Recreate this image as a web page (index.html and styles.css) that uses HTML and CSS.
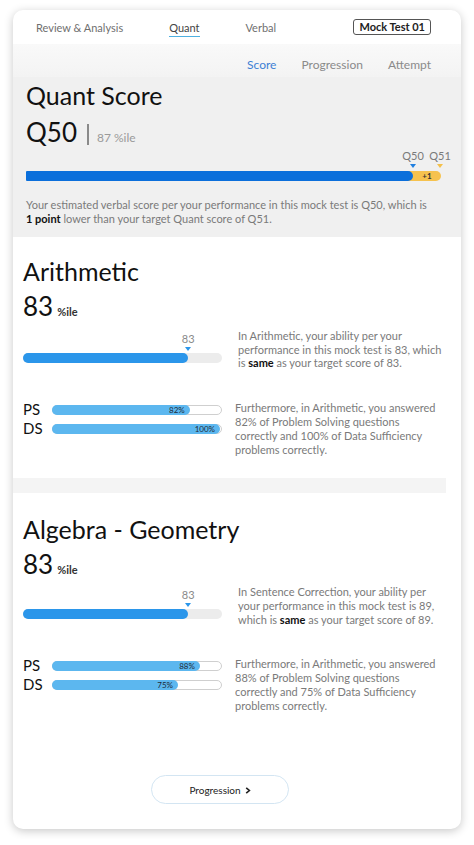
FILE: index.html
```html
<!DOCTYPE html>
<html>
<head>
<meta charset="utf-8">
<link rel="stylesheet" href="styles.css">
</head>
<body>
<div class="card">
  <nav class="topnav">
    <span class="tn">Review &amp; Analysis</span>
    <span class="tn tn-active">Quant</span>
    <span class="tn">Verbal</span>
    <span class="mock">Mock Test 01</span>
  </nav>
  <div class="subtabs">
    <span class="st st-active">Score</span>
    <span class="st">Progression</span>
    <span class="st">Attempt</span>
  </div>

  <section class="quant">
    <h1 class="qtitle">Quant Score</h1>
    <div class="qscore"><span class="qbig">Q50</span><span class="qdiv"></span><span class="qpct">87 %ile</span></div>
    <div class="qmarks">
      <div class="qmark" style="left:387px"><span class="qlab">Q50</span><span class="tri tri-blue"></span></div>
      <div class="qmark" style="left:414px"><span class="qlab">Q51</span><span class="tri tri-yellow"></span></div>
    </div>
    <div class="qbar">
      <div class="qbar-blue" style="width:387px"></div>
      <div class="qbar-yellow">+1</div>
    </div>
    <p class="qdesc">Your estimated verbal score per your performance in this mock test is Q50, which is<br><b>1 point</b> lower than your target Quant score of Q51.</p>
  </section>

  <section class="topic">
    <h2 class="ttitle">Arithmetic</h2>
    <div class="tscore"><span class="tbig">83</span><span class="tile">%ile</span></div>
    <div class="trow">
      <div class="tleft">
        <div class="tmarks">
          <div class="tmark" style="left:83%"><span class="tlab">83</span><span class="tri tri-mid"></span></div>
        </div>
        <div class="tbar"><div class="tfill" style="width:83%"></div></div>
      </div>
      <p class="tdesc">In Arithmetic, your ability per your<br>performance in this mock test is 83, which<br>is <b>same</b> as your target score of 83.</p>
    </div>
    <div class="prow">
      <div class="pleft">
        <div class="pline"><span class="plab">PS</span><div class="pbar"><div class="pfill" style="width:82%">82%</div></div></div>
        <div class="pline"><span class="plab">DS</span><div class="pbar"><div class="pfill" style="width:100%">100%</div></div></div>
      </div>
      <p class="pdesc">Furthermore, in Arithmetic, you answered<br>82% of Problem Solving questions<br>correctly and 100% of Data Sufficiency<br>problems correctly.</p>
    </div>
  </section>

  <div class="sep"></div>

  <section class="topic topic2">
    <h2 class="ttitle">Algebra - Geometry</h2>
    <div class="tscore"><span class="tbig">83</span><span class="tile">%ile</span></div>
    <div class="trow trow2">
      <div class="tleft">
        <div class="tmarks">
          <div class="tmark" style="left:83%"><span class="tlab">83</span><span class="tri tri-mid"></span></div>
        </div>
        <div class="tbar"><div class="tfill" style="width:83%"></div></div>
      </div>
      <p class="tdesc">In Sentence Correction, your ability per<br>your performance in this mock test is 89,<br>which is <b>same</b> as your target score of 89.</p>
    </div>
    <div class="prow">
      <div class="pleft">
        <div class="pline"><span class="plab">PS</span><div class="pbar"><div class="pfill" style="width:88%">88%</div></div></div>
        <div class="pline"><span class="plab">DS</span><div class="pbar"><div class="pfill" style="width:75%">75%</div></div></div>
      </div>
      <p class="pdesc">Furthermore, in Arithmetic, you answered<br>88% of Problem Solving questions<br>correctly and 75% of Data Sufficiency<br>problems correctly.</p>
    </div>
  </section>

  <div class="btnwrap">
    <button class="btn">Progression <svg class="chev" width="6" height="7" viewBox="0 0 6 7"><path d="M1.2 0.8 L4.4 3.5 L1.2 6.2" fill="none" stroke="#222" stroke-width="1.6"/></svg></button>
  </div>
</div>
</body>
</html>
```

FILE: styles.css
```css
* { box-sizing: border-box; }
html, body { margin: 0; padding: 0; background: #fff; }
body {
  padding: 10px 13px;
  font-family: Lato, "Open Sans", sans-serif;
  color: #111;
}
.card {
  width: 448px;
  height: 819px;
  border-radius: 10px;
  background: #fff;
  box-shadow: 0 2px 10px rgba(0,0,0,0.22);
  overflow: hidden;
}
.topnav {
  height: 34px;
  display: flex;
  align-items: center;
  padding: 0 30px 0 23px;
  gap: 46px;
}
.tn {
  font-size: 11px;
  color: #6f6f6f;
  line-height: 13px;
  padding-top: 1px;
}
.tn-active {
  color: #444;
  padding-top: 4px;
  padding-bottom: 2px;
  border-bottom: 1.5px solid #4fb0e0;
}
.mock {
  margin-left: auto;
  font-size: 11px;
  font-weight: 700;
  color: #222;
  border: 1px solid #555;
  border-radius: 3px;
  height: 16px;
  line-height: 14px;
  padding: 0 5px;
}
.subtabs {
  height: 33px;
  display: flex;
  justify-content: flex-end;
  align-items: center;
  gap: 25px;
  padding: 7px 30px 0 0;
  background: linear-gradient(#f9f9f9, #f3f3f3);
}
.st { font-size: 12px; color: #8a8a8a; }
.st-active { color: #3d7fd4; }

.quant {
  background: #f0f0f0;
  height: 160px;
  padding: 3px 20px 0 13px;
}
.qtitle {
  margin: 0;
  font-size: 25px;
  font-weight: 400;
  line-height: 30px;
  color: #111;
}
.qscore {
  margin-top: 5px;
  line-height: 34px;
  height: 34px;
}
.qbig { font-size: 26px; color: #111; }
.qdiv {
  display: inline-block;
  width: 2px;
  height: 21px;
  background: #8a8a8a;
  margin: 0 8px 0 10px;
  vertical-align: -3px;
}
.qpct { font-size: 12px; color: #9a9a9a; }
.qmarks {
  position: relative;
  height: 22px;
  margin-top: 0;
  width: 415px;
}
.qmark {
  position: absolute;
  top: 0;
  width: 0;
  display: flex;
  flex-direction: column;
  align-items: center;
}
.qlab {
  font-size: 11px;
  line-height: 14px;
  color: #7a7a7a;
  white-space: nowrap;
}
.tri {
  width: 0; height: 0;
  border-left: 3px solid transparent;
  border-right: 3px solid transparent;
  border-top: 4px solid #2b96ea;
}
.qmark .tri { margin-top: 1px; }
.tri-blue { border-top-color: #1f7fe0; }
.tri-yellow { border-top-color: #f4c04a; }
.qbar {
  display: flex;
  width: 415px;
  height: 10px;
}
.qbar-blue {
  position: relative;
  z-index: 1;
  height: 10px;
  background: #0b6fdb;
  border-radius: 1px 5px 5px 1px;
}
.qbar-yellow {
  flex: 1;
  margin-left: -6px;
  padding-left: 6px;
  height: 10px;
  background: #f6c24e;
  border-radius: 0 5px 5px 0;
  font-size: 8px;
  font-weight: 700;
  color: #333;
  line-height: 10px;
  text-align: center;
}
.qdesc {
  margin: 17px 0 0;
  font-size: 11px;
  line-height: 13.5px;
  color: #7a7a7a;
}
.qdesc b, .tdesc b { color: #111; }

.topic {
  padding: 19px 0 0 10px;
}
.topic2 { padding-top: 21px; }
.ttitle {
  margin: 0;
  font-size: 25px;
  font-weight: 400;
  line-height: 31px;
  color: #111;
}
.tscore {
  margin-top: 4px;
  line-height: 31px;
  height: 31px;
}
.tbig { font-size: 26px; color: #111; }
.tile { font-size: 11px; font-weight: 700; color: #333; margin-left: 4px; }
.trow {
  display: flex;
  align-items: flex-start;
  gap: 16px;
  margin-top: 7px;
}
.trow2 { margin-top: 5px; }
.tleft { width: 199px; padding-top: 3px; flex: none; }
.tmarks { position: relative; height: 21px; }
.tmark {
  position: absolute;
  top: 0;
  width: 0;
  display: flex;
  flex-direction: column;
  align-items: center;
}
.tlab { font-size: 11px; line-height: 13px; color: #8a8a8a; }
.tri-mid { margin-top: 2px; }
.tbar {
  height: 10px;
  border-radius: 5px;
  background: #ececec;
}
.tfill {
  height: 10px;
  border-radius: 5px;
  background: #2b96ea;
}
.tdesc {
  margin: 0;
  font-size: 11px;
  line-height: 13.7px;
  color: #7a7a7a;
}
.prow {
  display: flex;
  align-items: flex-start;
  gap: 13px;
  margin-top: 30px;
}
.pleft { width: 199px; flex: none; }
.pline {
  display: flex;
  align-items: center;
  height: 19px;
}
.plab {
  width: 29px;
  font-size: 15px;
  line-height: 19px;
  color: #111;
}
.pbar {
  width: 170px;
  height: 10px;
  border-radius: 5px;
  border: 1px solid #cfcfcf;
  background: #fff;
}
.pfill {
  margin: -1px;
  height: 10px;
  border-radius: 5px;
  background: #5cb7ef;
  font-size: 8px;
  line-height: 10px;
  color: #1c2a38;
  text-align: right;
  padding-right: 5px;
  max-width: calc(100% + 2px);
}
.pdesc {
  margin: 0;
  padding-top: 1px;
  font-size: 11px;
  line-height: 14px;
  color: #7a7a7a;
}
.sep {
  height: 15px;
  margin: 21px 15px 0 0;
  background: #f4f4f4;
}
.btnwrap {
  padding: 0 0 0 138px;
  margin-top: 62px;
}
.btn {
  width: 138px;
  height: 29px;
  border-radius: 15px;
  border: 1px solid #d3e5f2;
  background: #fff;
  font-family: Lato, "Open Sans", sans-serif;
  font-size: 10px;
  color: #222;
  display: flex;
  align-items: center;
  justify-content: center;
  gap: 4px;
  padding: 0;
}
.chev { display: block; margin-top: 1px; }
```
